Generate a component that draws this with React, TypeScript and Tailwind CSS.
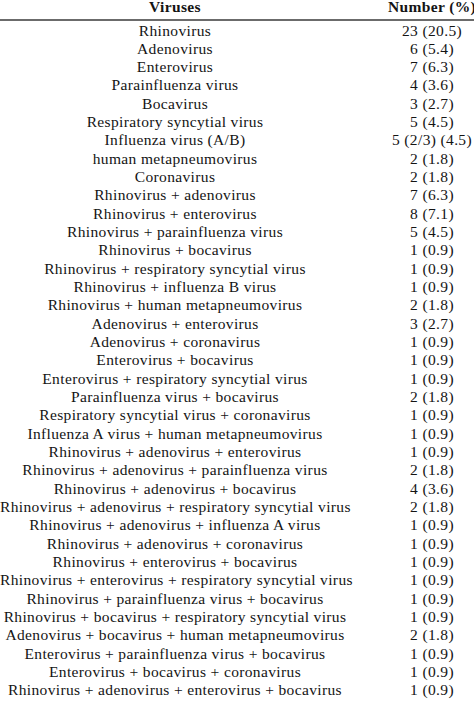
const rows: [string, string][] = [
  ["Rhinovirus", "23 (20.5)"],
  ["Adenovirus", "6 (5.4)"],
  ["Enterovirus", "7 (6.3)"],
  ["Parainfluenza virus", "4 (3.6)"],
  ["Bocavirus", "3 (2.7)"],
  ["Respiratory syncytial virus", "5 (4.5)"],
  ["Influenza virus (A/B)", "5 (2/3) (4.5)"],
  ["human metapneumovirus", "2 (1.8)"],
  ["Coronavirus", "2 (1.8)"],
  ["Rhinovirus + adenovirus", "7 (6.3)"],
  ["Rhinovirus + enterovirus", "8 (7.1)"],
  ["Rhinovirus + parainfluenza virus", "5 (4.5)"],
  ["Rhinovirus + bocavirus", "1 (0.9)"],
  ["Rhinovirus + respiratory syncytial virus", "1 (0.9)"],
  ["Rhinovirus + influenza B virus", "1 (0.9)"],
  ["Rhinovirus + human metapneumovirus", "2 (1.8)"],
  ["Adenovirus + enterovirus", "3 (2.7)"],
  ["Adenovirus + coronavirus", "1 (0.9)"],
  ["Enterovirus + bocavirus", "1 (0.9)"],
  ["Enterovirus + respiratory syncytial virus", "1 (0.9)"],
  ["Parainfluenza virus + bocavirus", "2 (1.8)"],
  ["Respiratory syncytial virus + coronavirus", "1 (0.9)"],
  ["Influenza A virus + human metapneumovirus", "1 (0.9)"],
  ["Rhinovirus + adenovirus + enterovirus", "1 (0.9)"],
  ["Rhinovirus + adenovirus + parainfluenza virus", "2 (1.8)"],
  ["Rhinovirus + adenovirus + bocavirus", "4 (3.6)"],
  ["Rhinovirus + adenovirus + respiratory syncytial virus", "2 (1.8)"],
  ["Rhinovirus + adenovirus + influenza A virus", "1 (0.9)"],
  ["Rhinovirus + adenovirus + coronavirus", "1 (0.9)"],
  ["Rhinovirus + enterovirus + bocavirus", "1 (0.9)"],
  ["Rhinovirus + enterovirus + respiratory syncytial virus", "1 (0.9)"],
  ["Rhinovirus + parainfluenza virus + bocavirus", "1 (0.9)"],
  ["Rhinovirus + bocavirus + respiratory syncytial virus", "1 (0.9)"],
  ["Adenovirus + bocavirus + human metapneumovirus", "2 (1.8)"],
  ["Enterovirus + parainfluenza virus + bocavirus", "1 (0.9)"],
  ["Enterovirus + bocavirus + coronavirus", "1 (0.9)"],
  ["Rhinovirus + adenovirus + enterovirus + bocavirus", "1 (0.9)"],
];

export default function App() {
  return (
    <div className="w-[474px] h-[703px] overflow-hidden bg-white text-[#141414] font-['Liberation_Serif',serif] text-[15.5px] tracking-[0.36px]">
      <div className="w-[514px]">
        <div className="grid grid-cols-[350px_164px] leading-[14px] font-bold pb-[5px]">
          <div className="text-center">Viruses</div>
          <div className="text-center">Number (%)</div>
        </div>
        <div className="h-[1.5px] bg-[#6b6b6b] mb-[1px]" />
        <div className="grid grid-cols-[350px_164px] leading-[18.33px]">
          {rows.map(([name, num]) => (
            <div key={name} className="contents">
              <div className="text-center whitespace-nowrap">{name}</div>
              <div className="text-center whitespace-nowrap">{num}</div>
            </div>
          ))}
        </div>
      </div>
    </div>
  );
}
